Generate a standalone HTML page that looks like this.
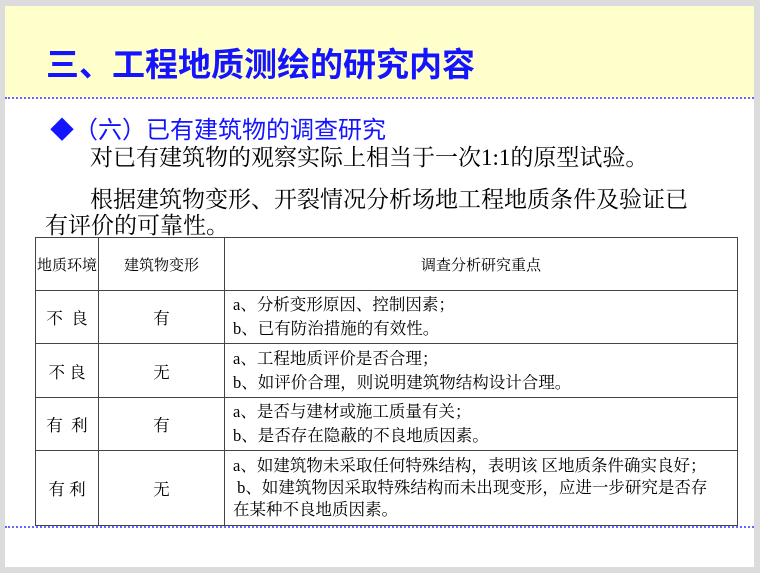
<!DOCTYPE html>
<html><head><meta charset="utf-8"><style>
*{margin:0;padding:0;box-sizing:border-box}
body{width:760px;height:573px;background:#dcdcdc;position:relative;overflow:hidden}
.slide{position:absolute;left:5px;top:6px;width:749px;height:561px;background:#fff}
.hdr{position:absolute;left:0;top:0;width:749px;height:92px;background:#ffffcc}
.dot{position:absolute;left:0;width:749px;height:0;border-top:2px dotted #6666ff}
.t{position:absolute;white-space:nowrap}
.title{left:41px;top:32px;font:bold 33px "Liberation Sans","Noto Sans CJK SC",sans-serif;color:#1414ff}
.sub{left:45px;top:104px;font:24px "Liberation Sans","Noto Sans CJK SC",sans-serif;color:#1414ff}
.p{font:23px "Liberation Serif","Noto Serif CJK SC",serif;color:#000}
table{position:absolute;left:30px;top:231px;width:703px;height:288px;border-collapse:collapse;table-layout:fixed;font:16.5px "Liberation Serif","Noto Serif CJK SC",serif;color:#000}
td{border:1px solid #444;text-align:center;vertical-align:middle;white-space:nowrap;padding:0}
td.l{text-align:left;padding-left:8px;line-height:24px}
tr.h td{font-size:15px}
</style></head><body>
<div class="slide">
<div class="hdr"></div>
<div class="dot" style="top:91px"></div>
<div class="t title">三、工程地质测绘的研究内容</div>
<div class="t sub">◆（六）已有建筑物的调查研究</div>
<div class="t p" style="left:85px;top:133px">对已有建筑物的观察实际上相当于一次1:1的原型试验。</div>
<div class="t p" style="left:85px;top:175px">根据建筑物变形、开裂情况分析场地工程地质条件及验证已</div>
<div class="t p" style="left:40px;top:201px">有评价的可靠性。</div>
<table>
<colgroup><col style="width:63px"><col style="width:126px"><col></colgroup>
<tr class="h" style="height:53px"><td>地质环境</td><td>建筑物变形</td><td>调查分析研究重点</td></tr>
<tr style="height:53px"><td>不&nbsp;&nbsp;良</td><td>有</td><td class="l">a、分析变形原因、控制因素；<br>b、已有防治措施的有效性。</td></tr>
<tr style="height:54px"><td>不&nbsp;良</td><td>无</td><td class="l">a、工程地质评价是否合理；<br>b、如评价合理，则说明建筑物结构设计合理。</td></tr>
<tr style="height:53px"><td>有&nbsp;&nbsp;利</td><td>有</td><td class="l">a、是否与建材或施工质量有关；<br>b、是否存在隐蔽的不良地质因素。</td></tr>
<tr style="height:75px"><td>有&nbsp;利</td><td>无</td><td class="l" style="line-height:22px">a、如建筑物未采取任何特殊结构，表明该 区地质条件确实良好；<br>&nbsp;b、如建筑物因采取特殊结构而未出现变形，应进一步研究是否存<br>在某种不良地质因素。</td></tr>
</table>
<div class="dot" style="top:520px"></div>
</div>
</body></html>
